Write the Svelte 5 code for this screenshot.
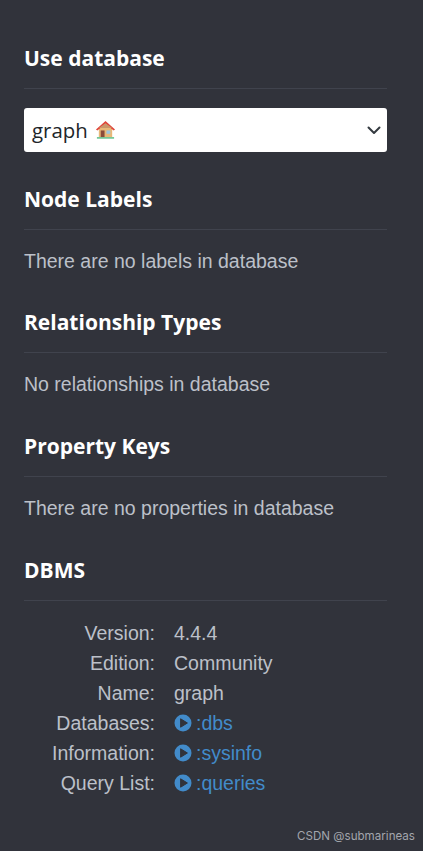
<script>
  const sections = [
    { title: 'Node Labels', text: 'There are no labels in database' },
    { title: 'Relationship Types', text: 'No relationships in database' },
    { title: 'Property Keys', text: 'There are no properties in database' }
  ];
  const plain = [
    { k: 'Version:', v: '4.4.4' },
    { k: 'Edition:', v: 'Community' },
    { k: 'Name:', v: 'graph' }
  ];
  const links = [
    { k: 'Databases:', v: ':dbs' },
    { k: 'Information:', v: ':sysinfo' },
    { k: 'Query List:', v: ':queries' }
  ];
</script>

<main class="drawer">
  <section class="first">
    <h4>Use database</h4>
    <div class="select">
      <span class="value">graph</span>
      <svg class="house" viewBox="0 0 22 22" width="21" height="21" aria-hidden="true">
        <rect x="4" y="9" width="14" height="10" fill="#e8b878" />
        <path d="M1 11 L11 2 L21 11 L19.5 12 L11 5 L2.5 12 Z" fill="#e0453a" />
        <path d="M4 9.5 L11 4.5 L18 9.5 Z" fill="#c9966a" />
        <rect x="6" y="12" width="4" height="7" fill="#8a4b3a" />
        <rect x="12" y="12" width="4" height="3.5" fill="#9cc6e0" />
        <rect x="2" y="19" width="18" height="1.6" fill="#62c08a" />
      </svg>
      <svg class="chev" viewBox="0 0 16 16" width="16" height="16" aria-hidden="true">
        <path d="M2.5 5.5 L8 11 L13.5 5.5" fill="none" stroke="#343a40" stroke-width="2" stroke-linecap="round" stroke-linejoin="round" />
      </svg>
    </div>
  </section>

  {#each sections as s}
    <section>
      <h4>{s.title}</h4>
      <p>{s.text}</p>
    </section>
  {/each}

  <section>
    <h4>DBMS</h4>
    <div class="table">
      {#each plain as r}
        <div class="key">{r.k}</div>
        <div class="val">{r.v}</div>
      {/each}
      {#each links as r}
        <div class="key">{r.k}</div>
        <div class="val link">
          <svg viewBox="0 0 18 18" width="18" height="18" aria-hidden="true">
            <circle cx="9" cy="9" r="8.5" fill="#428bca" />
            <path d="M6.6 4.8 L13.4 9 L6.6 13.2 Z" fill="#31333b" stroke="#31333b" stroke-width="1" stroke-linejoin="round" />
          </svg>
          <span>{r.v}</span>
        </div>
      {/each}
    </div>
  </section>

  <footer>CSDN @submarineas</footer>
</main>

<style>
  :global(body) {
    margin: 0;
    background: #31333b;
  }
  .drawer {
    box-sizing: border-box;
    position: relative;
    width: 423px;
    height: 851px;
    padding: 42px 36px 0 24px;
    background: #31333b;
    color: #bcc0c9;
    font-family: "Liberation Sans", Arial, sans-serif;
    overflow: hidden;
  }
  section {
    margin-bottom: 31.7px;
  }
  section.first {
    margin-bottom: 30.6px;
  }
  h4 {
    margin: 0;
    height: 47px;
    line-height: 32px;
    box-sizing: border-box;
    border-bottom: 1px solid #40434d;
    font-family: "Open Sans", sans-serif;
    font-weight: 700;
    font-size: 21px;
    color: #fff;
  }
  p {
    margin: 0;
    padding-top: 17px;
    font-size: 19.5px;
    line-height: 28px;
  }
  .select {
    margin-top: 19px;
    height: 44px;
    box-sizing: border-box;
    background: #fff;
    border-radius: 3px;
    display: flex;
    align-items: center;
    padding: 0 5.5px 0 8px;
    font-family: "Open Sans", sans-serif;
    font-size: 20.4px;
    color: #212529;
  }
  .value {
    margin-top: -1px;
  }
  .house {
    margin-left: 7.5px;
    margin-top: -1px;
  }
  .chev {
    margin-left: auto;
    margin-top: -1px;
  }
  .table {
    display: grid;
    grid-template-columns: 131px 1fr;
    column-gap: 19px;
    grid-auto-rows: 30px;
    margin-top: 17px;
    font-size: 19.5px;
    line-height: 30px;
  }
  .key {
    text-align: right;
  }
  .link {
    display: flex;
    align-items: center;
    gap: 4px;
    color: #428bca;
  }
  footer {
    position: absolute;
    right: 8px;
    top: 829px;
    font-family: "Inter", "Liberation Sans", sans-serif;
    font-size: 11.6px;
    line-height: 14px;
    color: #a3a6ad;
  }
</style>
